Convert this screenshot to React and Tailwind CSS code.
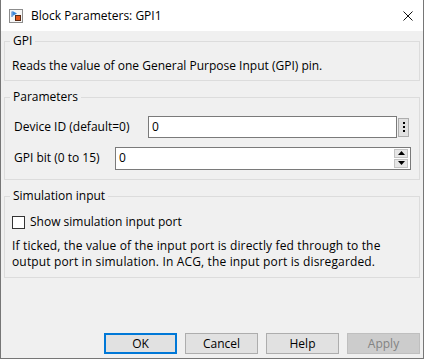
import React from 'react';

const font = { fontFamily: '"Open Sans", "Noto Sans", Arial, sans-serif' };

function BlockIcon() {
  return (
    <svg width="14" height="14" viewBox="0 0 14 14">
      <rect x="0.5" y="0.5" width="13" height="13" fill="#f6f6f6" stroke="#8c8c8c" />
      <path d="M3 2.5 L3 8" stroke="#2a6fc9" strokeWidth="1" />
      <path d="M3.5 2 L8 4.5 L3.5 7 Z" fill="#3a86d8" />
      <rect x="6.5" y="6.5" width="5" height="5" fill="#e2561c" stroke="#5a2a14" />
    </svg>
  );
}

function Group({ title, children, className = '' }) {
  return (
    <fieldset className={`border border-[#dcdcdc] pl-[7px] pr-[8px] ${className}`}>
      <legend className="ml-[-2px] px-[3px] leading-4">{title}</legend>
      {children}
    </fieldset>
  );
}

function DialogButton({ children, primary, disabled }) {
  const cls = primary
    ? 'border-2 border-[#0078d7] bg-[#e1e1e1] text-black'
    : disabled
    ? 'border border-[#bfbfbf] bg-[#cccccc] text-[#838383]'
    : 'border border-[#adadad] bg-[#e1e1e1] text-black';
  return (
    <button type="button" className={`flex h-[21px] w-[73px] items-center justify-center text-[12px] ${cls}`}>
      {children}
    </button>
  );
}

export default function App() {
  return (
    <div
      className="flex h-[359px] w-[424px] flex-col border-x border-b border-[#767676] text-[12px] text-black"
      style={font}
    >
      {/* title bar */}
      <div className="flex h-[31px] shrink-0 items-center bg-white pl-[8px] pr-[10px]">
        <BlockIcon />
        <span className="ml-[8px] text-[12px]">Block Parameters: GPI1</span>
        <svg className="ml-auto" width="10" height="10" viewBox="0 0 10 10">
          <path d="M0.5 0.5 L9.5 9.5 M9.5 0.5 L0.5 9.5" stroke="#111" strokeWidth="1" />
        </svg>
      </div>

      {/* body */}
      <div className="flex flex-1 flex-col bg-[#f0f0f0] px-[3px] pt-[2px] pb-[4px]">
        <Group title="GPI" className="pt-[9px] pb-[6px]">
          <p className="leading-4">Reads the value of one General Purpose Input (GPI) pin.</p>
        </Group>

        <Group title="Parameters" className="mt-[8px] pt-[11px] pb-[10px]">
          <div className="flex h-[22px] items-center pl-[2px]">
            <span className="w-[134px] shrink-0 whitespace-nowrap">Device ID (default=0)</span>
            <div className="flex h-[22px] w-[249px] items-center border border-[#7a7a7a] bg-white pl-[3px]">0</div>
            <button type="button" className="ml-[1px] flex h-[19px] w-[11px] flex-col items-center justify-center gap-[2px] border border-[#adadad] bg-[#e1e1e1]">
              <span className="h-[2px] w-[2px] bg-black" />
              <span className="h-[2px] w-[2px] bg-black" />
              <span className="h-[2px] w-[2px] bg-black" />
            </button>
          </div>
          <div className="mt-[9px] flex h-[22px] items-center pl-[2px]">
            <span className="w-[101px] shrink-0 whitespace-nowrap">GPI bit (0 to 15)</span>
            <div className="flex h-[23px] flex-1 items-center border border-[#7a7a7a] bg-white pl-[3px] pr-[2px]">
              <span className="flex-1">0</span>
              <div className="flex flex-col gap-[1px]">
                <div className="flex h-[9px] w-[14px] items-center justify-center border border-[#c4c4c4] bg-[#e6e6e6]">
                  <svg width="7" height="4" viewBox="0 0 7 4"><path d="M0 4 L3.5 0 L7 4 Z" fill="#000" /></svg>
                </div>
                <div className="flex h-[9px] w-[14px] items-center justify-center border border-[#c4c4c4] bg-[#e6e6e6]">
                  <svg width="7" height="4" viewBox="0 0 7 4"><path d="M0 0 L3.5 4 L7 0 Z" fill="#000" /></svg>
                </div>
              </div>
            </div>
          </div>
        </Group>

        <Group title="Simulation input" className="mt-[8px] pt-[10px] pb-[7px]">
          <label className="flex h-4 items-center gap-[5px]">
            <span className="h-[13px] w-[13px] border border-[#333333] bg-white" />
            <span>Show simulation input port</span>
          </label>
          <p className="mt-[8px] leading-4 tracking-[0.15px]">
            If ticked, the value of the input port is directly fed through to the
            <br />
            output port in simulation. In ACG, the input port is disregarded.
          </p>
        </Group>

        <div className="mt-auto flex justify-end gap-2">
          <DialogButton primary>OK</DialogButton>
          <DialogButton>Cancel</DialogButton>
          <DialogButton>Help</DialogButton>
          <DialogButton disabled>Apply</DialogButton>
        </div>
      </div>
    </div>
  );
}
